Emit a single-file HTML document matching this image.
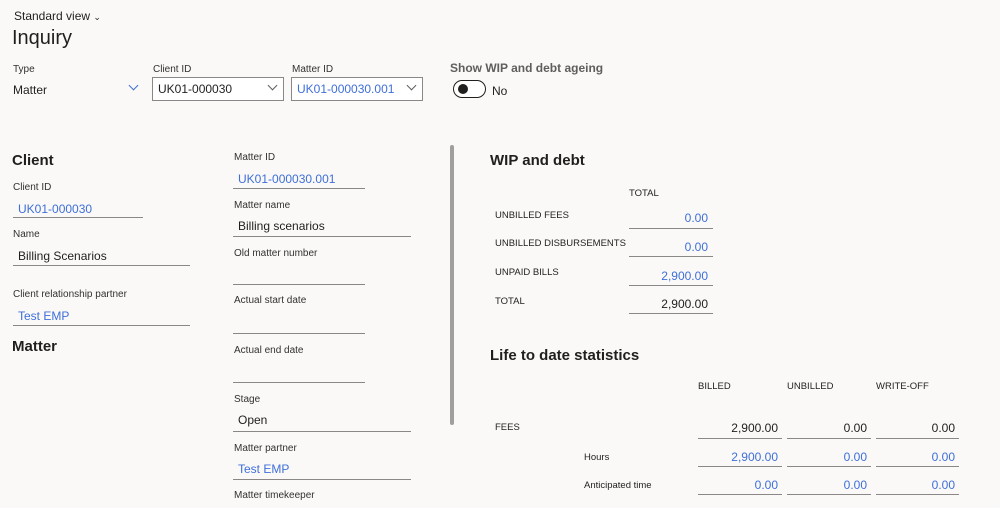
<!DOCTYPE html>
<html><head><style>
*{margin:0;padding:0;box-sizing:border-box}
body{width:1000px;height:508px;background:#faf9f8;font-family:"Liberation Sans",sans-serif;color:#201f1e;position:relative;overflow:hidden}
.a{position:absolute;white-space:nowrap}
.lbl{font-size:10px;color:#323130}
.val{font-size:12px}
.blue{color:#3f6fd8}
.ul{position:absolute;border-bottom:1px solid #8a8886}
.h{font-size:15px;font-weight:bold;color:#201f1e}
.box{position:absolute;height:24px;border:1px solid #8a8886;background:#fff;font-size:12px;padding:4px 5px}
.chev{position:absolute;right:7px;top:4px;width:7px;height:7px;border-right:1px solid #605e5c;border-bottom:1px solid #605e5c;transform:rotate(45deg)}
.r{text-align:right}
.cap{font-size:9.5px;color:#201f1e}
</style></head><body>
<div class="a" style="left:14px;top:9px;font-size:12px">Standard view <span style="font-size:9px">&#8964;</span></div>
<div class="a" style="left:12px;top:27px;font-size:20px">Inquiry</div>

<div class="a lbl" style="left:13px;top:64px">Type</div>
<div class="a val" style="left:13px;top:83px">Matter</div>
<div class="a" style="left:130px;top:82px;width:7px;height:7px;border-right:1px solid #3f6fd8;border-bottom:1px solid #3f6fd8;transform:rotate(45deg)"></div>
<div class="a lbl" style="left:153px;top:64px">Client ID</div>
<div class="box" style="left:152px;top:77px;width:132px">UK01-000030<div class="chev"></div></div>
<div class="a lbl" style="left:292px;top:64px">Matter ID</div>
<div class="box blue" style="left:291px;top:77px;width:132px">UK01-000030.001<div class="chev"></div></div>
<div class="a" style="left:450px;top:61px;font-size:12px;font-weight:bold;color:#605e5c">Show WIP and debt ageing</div>
<div class="a" style="left:453px;top:80px;width:33px;height:18px;border:1px solid #201f1e;border-radius:9px;background:#fff"><div style="position:absolute;left:4px;top:3px;width:10px;height:10px;border-radius:50%;background:#201f1e"></div></div>
<div class="a val" style="left:492px;top:84px">No</div>

<div class="a h" style="left:12px;top:152px">Client</div>
<div class="a lbl" style="left:13px;top:182px">Client ID</div>
<div class="a val blue" style="left:18px;top:202px">UK01-000030</div><div class="ul" style="left:13px;top:217px;width:130px"></div>
<div class="a lbl" style="left:13px;top:229px">Name</div>
<div class="a val" style="left:18px;top:249px">Billing Scenarios</div><div class="ul" style="left:13px;top:265px;width:177px"></div>
<div class="a lbl" style="left:13px;top:289px">Client relationship partner</div>
<div class="a val blue" style="left:18px;top:309px">Test EMP</div><div class="ul" style="left:13px;top:325px;width:177px"></div>
<div class="a h" style="left:12px;top:338px">Matter</div>

<div class="a lbl" style="left:234px;top:152px">Matter ID</div>
<div class="a val blue" style="left:238px;top:172px">UK01-000030.001</div><div class="ul" style="left:233px;top:188px;width:132px"></div>
<div class="a lbl" style="left:234px;top:200px">Matter name</div>
<div class="a val" style="left:238px;top:219px">Billing scenarios</div><div class="ul" style="left:233px;top:236px;width:178px"></div>
<div class="a lbl" style="left:234px;top:248px">Old matter number</div>
<div class="ul" style="left:233px;top:284px;width:132px"></div>
<div class="a lbl" style="left:234px;top:295px">Actual start date</div>
<div class="ul" style="left:233px;top:333px;width:132px"></div>
<div class="a lbl" style="left:234px;top:345px">Actual end date</div>
<div class="ul" style="left:233px;top:382px;width:132px"></div>
<div class="a lbl" style="left:234px;top:394px">Stage</div>
<div class="a val" style="left:238px;top:413px">Open</div><div class="ul" style="left:233px;top:431px;width:178px"></div>
<div class="a lbl" style="left:234px;top:443px">Matter partner</div>
<div class="a val blue" style="left:238px;top:462px">Test EMP</div><div class="ul" style="left:233px;top:479px;width:178px"></div>
<div class="a lbl" style="left:234px;top:490px">Matter timekeeper</div>

<div class="a" style="left:450px;top:145px;width:4px;height:280px;background:#a19f9d;border-radius:2px"></div>

<div class="a h" style="left:490px;top:152px">WIP and debt</div>
<div class="a cap" style="left:629px;top:188px">TOTAL</div>
<div class="a cap" style="left:495px;top:210px">UNBILLED FEES</div>
<div class="a val blue r" style="left:629px;top:211px;width:79px">0.00</div><div class="ul" style="left:629px;top:228px;width:84px"></div>
<div class="a cap" style="left:495px;top:238px">UNBILLED DISBURSEMENTS</div>
<div class="a val blue r" style="left:629px;top:240px;width:79px">0.00</div><div class="ul" style="left:629px;top:256px;width:84px"></div>
<div class="a cap" style="left:495px;top:267px">UNPAID BILLS</div>
<div class="a val blue r" style="left:629px;top:269px;width:79px">2,900.00</div><div class="ul" style="left:629px;top:285px;width:84px"></div>
<div class="a cap" style="left:495px;top:296px">TOTAL</div>
<div class="a val r" style="left:629px;top:297px;width:79px">2,900.00</div><div class="ul" style="left:629px;top:313px;width:84px"></div>

<div class="a h" style="left:490px;top:347px">Life to date statistics</div>
<div class="a cap" style="left:698px;top:381px">BILLED</div>
<div class="a cap" style="left:787px;top:381px">UNBILLED</div>
<div class="a cap" style="left:876px;top:381px">WRITE-OFF</div>
<div class="a cap" style="left:495px;top:422px">FEES</div>
<div class="a val r" style="left:698px;top:421px;width:80px">2,900.00</div><div class="ul" style="left:698px;top:438px;width:84px"></div>
<div class="a val r" style="left:787px;top:421px;width:80px">0.00</div><div class="ul" style="left:787px;top:438px;width:84px"></div>
<div class="a val r" style="left:876px;top:421px;width:79px">0.00</div><div class="ul" style="left:876px;top:438px;width:83px"></div>
<div class="a cap" style="left:584px;top:452px">Hours</div>
<div class="a val blue r" style="left:698px;top:450px;width:80px">2,900.00</div><div class="ul" style="left:698px;top:466px;width:84px"></div>
<div class="a val blue r" style="left:787px;top:450px;width:80px">0.00</div><div class="ul" style="left:787px;top:466px;width:84px"></div>
<div class="a val blue r" style="left:876px;top:450px;width:79px">0.00</div><div class="ul" style="left:876px;top:466px;width:83px"></div>
<div class="a cap" style="left:584px;top:480px">Anticipated time</div>
<div class="a val blue r" style="left:698px;top:478px;width:80px">0.00</div><div class="ul" style="left:698px;top:494px;width:84px"></div>
<div class="a val blue r" style="left:787px;top:478px;width:80px">0.00</div><div class="ul" style="left:787px;top:494px;width:84px"></div>
<div class="a val blue r" style="left:876px;top:478px;width:79px">0.00</div><div class="ul" style="left:876px;top:494px;width:83px"></div>
</body></html>
